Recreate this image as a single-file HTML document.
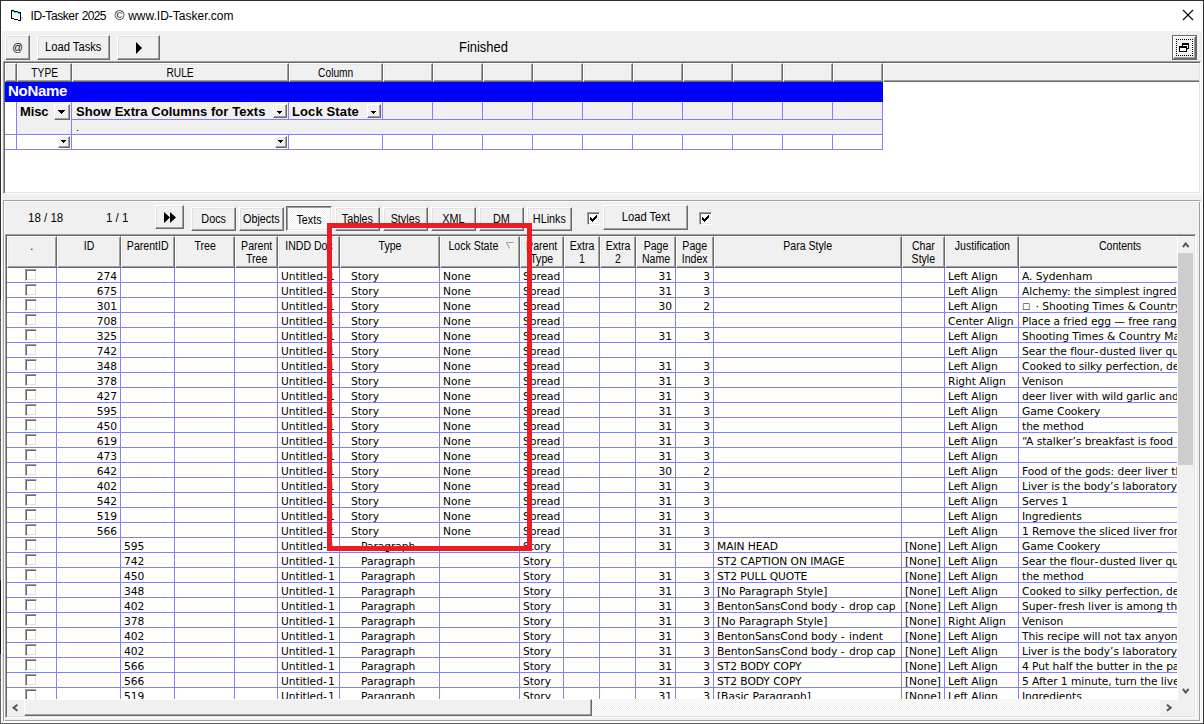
<!DOCTYPE html><html><head><meta charset="utf-8"><title>ID-Tasker 2025</title><style>
*{box-sizing:border-box;margin:0;padding:0}
html,body{width:1204px;height:724px;overflow:hidden;background:#f0f0f0}
body{position:relative;font-family:"Liberation Sans",sans-serif;font-size:11px;color:#000}
.a{position:absolute}
.t{position:absolute;white-space:pre;line-height:1}
.ms{font-family:"Liberation Sans",sans-serif;font-size:11px}
.dj{font-family:"DejaVu Sans","Liberation Sans",sans-serif;font-size:10.7px;letter-spacing:-0.05px}
.btn{position:absolute;background:#f0f0f0;border-top:1px solid #fff;border-left:1px solid #fff;border-right:1px solid #696969;border-bottom:1px solid #696969;box-shadow:inset -1px -1px 0 #a0a0a0, inset 1px 1px 0 #e3e3e3;text-align:center;white-space:pre}
.btn.down{border-color:#696969 #fff #fff #696969;box-shadow:inset 1px 1px 0 #a0a0a0, inset -1px -1px 0 #e3e3e3;background-color:#f8f8f8;background-image:conic-gradient(#fff 25%,#f0f0f0 0 50%,#fff 0 75%,#f0f0f0 0);background-size:2px 2px}
.hc{position:absolute;background:#f0f0f0;border-top:1px solid #fff;border-left:1px solid #fff;border-right:1px solid #696969;border-bottom:1px solid #696969;box-shadow:inset -1px -1px 0 #a0a0a0, inset 1px 1px 0 #e8e8e8;text-align:center;white-space:pre;overflow:hidden}
.vl{position:absolute;width:1px;background:#8080ff}
.hl{position:absolute;height:1px;background:#8080ff}
.cb{position:absolute;width:12px;height:12px;background:#fff;border-top:1px solid #a0a0a0;border-left:1px solid #a0a0a0;border-right:1px solid #fff;border-bottom:1px solid #fff;box-shadow:inset 1px 1px 0 #696969, inset -1px -1px 0 #e3e3e3}
.dd{position:absolute;background:#f0f0f0;border-top:1px solid #fff;border-left:1px solid #fff;border-right:1px solid #696969;border-bottom:1px solid #696969;box-shadow:inset -1px -1px 0 #a0a0a0}
.b13{font-weight:bold;font-size:13px}
.sx{display:inline-block;font-size:12px;transform:scaleX(.88);transform-origin:50% 50%;white-space:pre;text-align:center}
.sl{transform-origin:0 50%}
</style></head><body>
<div class="a" style="left:0;top:0;width:1204px;height:724px;border:1px solid #2e2e2e;border-bottom-color:#5a5a5a"></div>
<div class="a" style="left:0;top:300px;width:1px;height:424px;background:linear-gradient(#666 0 280px,#1a1a1a 280px 354px,#666 354px)"></div>
<div class="a" style="left:1px;top:1px;width:1202px;height:722px;border:1px solid #fff;border-top:0"></div>
<div class="a" style="left:1px;top:1px;width:1202px;height:30px;background:#fff"></div>
<svg class="a" style="left:11px;top:10px" width="13" height="11" viewBox="0 0 13 11" shape-rendering="crispEdges"><rect x="0" y="0" width="3" height="1" fill="#000"/><rect x="0" y="1" width="1" height="8" fill="#000"/><rect x="3" y="1" width="4" height="1" fill="#000"/><rect x="7" y="2" width="3" height="1" fill="#000"/><rect x="9" y="2" width="1" height="9" fill="#000"/><rect x="0" y="8" width="3" height="1" fill="#000"/><rect x="3" y="9" width="4" height="1" fill="#000"/><rect x="7" y="10" width="3" height="1" fill="#000"/><rect x="1" y="1" width="2" height="1" fill="#00e5ee"/><rect x="3" y="2" width="4" height="1" fill="#00e5ee"/><rect x="7" y="3" width="2" height="1" fill="#00e5ee"/><rect x="1" y="2" width="2" height="6" fill="#fff"/><rect x="3" y="3" width="4" height="6" fill="#fff"/><rect x="7" y="4" width="2" height="6" fill="#fff"/><path d="M10.3 7.6L12.6 7.6L10.3 9.8Z" fill="#a8a8a8" shape-rendering="auto"/></svg>
<div class="t" style="left:30.5px;top:9px;font-size:12px;line-height:14px;letter-spacing:-0.4px">ID-Tasker</div>
<div class="t" style="left:81.8px;top:9px;font-size:12px;line-height:14px;letter-spacing:-0.65px">2025</div>
<div class="t" style="left:114.5px;top:8px;font-size:13.5px;line-height:15px">©</div>
<div class="t" style="left:128.2px;top:9px;font-size:12px;line-height:14px">www.ID-Tasker.com</div>
<svg class="a" style="left:1182px;top:9px" width="12" height="12" viewBox="0 0 12 12"><path d="M1 1L11 11M11 1L1 11" stroke="#000" stroke-width="1.1" fill="none"/></svg>
<div class="btn " style="left:5px;top:35px;width:25px;height:25px;line-height:22px;"><span class="sx " style="transform:scaleX(1.0)"><span style="font-size:10.5px">@</span></span></div>
<div class="btn " style="left:37px;top:35px;width:73px;height:25px;line-height:22px;"><span class="sx " style="transform:scaleX(0.93)">Load Tasks</span></div>
<div class="btn " style="left:117px;top:35px;width:43px;height:25px;line-height:22px;"></div>
<svg class="a" style="left:135px;top:41px" width="8" height="14" viewBox="0 0 8 14"><path d="M1 1L7 7L1 13Z" fill="#000"/></svg>
<div class="t" style="left:459px;top:39px;font-size:14px;line-height:16px;transform:scaleX(.925);transform-origin:0 50%">Finished</div>
<div class="a" style="left:1172px;top:35px;width:25px;height:25px;border:1px solid #696969;background:#f0f0f0"></div>
<div class="a" style="left:1173px;top:36px;width:23px;height:23px;border-top:1px solid #fff;border-left:1px solid #fff;border-right:1px solid #696969;border-bottom:1px solid #696969;box-shadow:inset -1px -1px 0 #a0a0a0"></div>
<div class="a" style="left:1176px;top:39px;width:17px;height:17px;border:1px dotted #000"></div>
<svg class="a" style="left:1179px;top:42px" width="11" height="11" viewBox="0 0 11 11"><rect x="3.5" y="1.5" width="6" height="5" fill="#fff" stroke="#000"/><rect x="3" y="1" width="7" height="2" fill="#000"/><rect x="0.5" y="4.5" width="7" height="5" fill="#fff" stroke="#000"/><rect x="0" y="4" width="8" height="2" fill="#000"/></svg>
<div class="a" style="left:3px;top:61px;width:1198px;height:133px;background:#fff;border-top:1px solid #a0a0a0;border-left:1px solid #a0a0a0;border-right:1px solid #fff;border-bottom:1px solid #fff;box-shadow:inset 1px 1px 0 #696969, inset -1px -1px 0 #e3e3e3"></div>
<div class="hc" style="left:5px;top:63px;width:12px;height:19px;line-height:18px"></div>
<div class="hc" style="left:17px;top:63px;width:55px;height:19px;line-height:18px"><span class="sx " style="transform:scaleX(0.85)">TYPE</span></div>
<div class="hc" style="left:72px;top:63px;width:217px;height:19px;line-height:18px"><span class="sx " style="transform:scaleX(0.85)">RULE</span></div>
<div class="hc" style="left:289px;top:63px;width:94px;height:19px;line-height:18px"><span class="sx " style="transform:scaleX(0.85)">Column</span></div>
<div class="hc" style="left:383px;top:63px;width:50px;height:19px;line-height:18px"></div>
<div class="hc" style="left:433px;top:63px;width:50px;height:19px;line-height:18px"></div>
<div class="hc" style="left:483px;top:63px;width:50px;height:19px;line-height:18px"></div>
<div class="hc" style="left:533px;top:63px;width:50px;height:19px;line-height:18px"></div>
<div class="hc" style="left:583px;top:63px;width:50px;height:19px;line-height:18px"></div>
<div class="hc" style="left:633px;top:63px;width:50px;height:19px;line-height:18px"></div>
<div class="hc" style="left:683px;top:63px;width:50px;height:19px;line-height:18px"></div>
<div class="hc" style="left:733px;top:63px;width:50px;height:19px;line-height:18px"></div>
<div class="hc" style="left:783px;top:63px;width:50px;height:19px;line-height:18px"></div>
<div class="hc" style="left:833px;top:63px;width:50px;height:19px;line-height:18px"></div>
<div class="hc" style="left:883px;top:63px;width:316px;height:19px;border-right:0;box-shadow:inset 0 -1px 0 #a0a0a0"></div>
<div class="a" style="left:5px;top:82px;width:878px;height:20px;background:#0000ff"></div>
<div class="t" style="left:8px;top:81px;font-weight:bold;font-size:15px;line-height:20px;color:#fff;letter-spacing:-0.3px">NoName</div>
<div class="a" style="left:17px;top:102px;width:865px;height:32px;background:#f0f0f0"></div>
<div class="hl" style="left:72px;top:119px;width:811px"></div>
<div class="hl" style="left:5px;top:134px;width:878px"></div>
<div class="hl" style="left:5px;top:149px;width:878px"></div>
<div class="vl" style="left:16px;top:102px;height:48px"></div>
<div class="vl" style="left:71px;top:102px;height:48px"></div>
<div class="vl" style="left:288px;top:102px;height:18px"></div>
<div class="vl" style="left:288px;top:134px;height:16px"></div>
<div class="vl" style="left:382px;top:102px;height:18px"></div>
<div class="vl" style="left:382px;top:134px;height:16px"></div>
<div class="vl" style="left:432px;top:102px;height:18px"></div>
<div class="vl" style="left:432px;top:134px;height:16px"></div>
<div class="vl" style="left:482px;top:102px;height:18px"></div>
<div class="vl" style="left:482px;top:134px;height:16px"></div>
<div class="vl" style="left:532px;top:102px;height:18px"></div>
<div class="vl" style="left:532px;top:134px;height:16px"></div>
<div class="vl" style="left:582px;top:102px;height:18px"></div>
<div class="vl" style="left:582px;top:134px;height:16px"></div>
<div class="vl" style="left:632px;top:102px;height:18px"></div>
<div class="vl" style="left:632px;top:134px;height:16px"></div>
<div class="vl" style="left:682px;top:102px;height:18px"></div>
<div class="vl" style="left:682px;top:134px;height:16px"></div>
<div class="vl" style="left:732px;top:102px;height:18px"></div>
<div class="vl" style="left:732px;top:134px;height:16px"></div>
<div class="vl" style="left:782px;top:102px;height:18px"></div>
<div class="vl" style="left:782px;top:134px;height:16px"></div>
<div class="vl" style="left:832px;top:102px;height:18px"></div>
<div class="vl" style="left:832px;top:134px;height:16px"></div>
<div class="vl" style="left:882px;top:102px;height:18px"></div>
<div class="vl" style="left:882px;top:134px;height:16px"></div>
<div class="vl" style="left:882px;top:119px;height:16px"></div>
<div class="t b13" style="left:20px;top:103px;line-height:17px;letter-spacing:-0.1px">Misc</div>
<div class="t b13" style="left:76px;top:103px;line-height:17px;letter-spacing:0.07px">Show Extra Columns for Texts</div>
<div class="t b13" style="left:292px;top:103px;line-height:17px;letter-spacing:0.12px">Lock State</div>
<div class="t" style="left:76px;top:121px;line-height:12px;font-size:11px">.</div>
<div class="dd" style="left:54px;top:104px;width:16px;height:16px"></div>
<svg class="a" style="left:58px;top:110px" width="7" height="4" viewBox="0 0 7 4" shape-rendering="crispEdges"><path d="M0 0h7v1h-7zM1 1h5v1h-5zM2 2h3v1h-3zM3 3h1v1h-1z" fill="#000"/></svg>
<div class="dd" style="left:273px;top:104px;width:14px;height:14px"></div>
<svg class="a" style="left:277px;top:111px" width="5" height="3" viewBox="0 0 5 3" shape-rendering="crispEdges"><path d="M0 0h5v1h-5zM1 1h3v1h-3zM2 2h1v1h-1z" fill="#000"/></svg>
<div class="dd" style="left:367px;top:104px;width:14px;height:14px"></div>
<svg class="a" style="left:371px;top:111px" width="5" height="3" viewBox="0 0 5 3" shape-rendering="crispEdges"><path d="M0 0h5v1h-5zM1 1h3v1h-3zM2 2h1v1h-1z" fill="#000"/></svg>
<div class="dd" style="left:58px;top:136px;width:12px;height:12px"></div>
<svg class="a" style="left:61px;top:140px" width="5" height="3" viewBox="0 0 5 3" shape-rendering="crispEdges"><path d="M0 0h5v1h-5zM1 1h3v1h-3zM2 2h1v1h-1z" fill="#000"/></svg>
<div class="dd" style="left:275px;top:136px;width:12px;height:12px"></div>
<svg class="a" style="left:278px;top:140px" width="5" height="3" viewBox="0 0 5 3" shape-rendering="crispEdges"><path d="M0 0h5v1h-5zM1 1h3v1h-3zM2 2h1v1h-1z" fill="#000"/></svg>
<div class="a" style="left:3px;top:200px;width:1198px;height:522px;border-top:1px solid #a0a0a0;border-left:1px solid #a0a0a0;border-right:1px solid #fff;border-bottom:1px solid #fff;box-shadow:inset 1px 1px 0 #fff, inset -1px -1px 0 #a0a0a0"></div>
<div class="t" style="left:28px;top:211px;font-size:12px;line-height:14px;transform:scaleX(.96);transform-origin:0 50%">18 / 18</div>
<div class="t" style="left:106px;top:211px;font-size:12px;line-height:14px;transform:scaleX(.96);transform-origin:0 50%">1 / 1</div>
<div class="btn " style="left:155px;top:205px;width:29px;height:24px;line-height:21px;"></div>
<svg class="a" style="left:163px;top:211px" width="14" height="13" viewBox="0 0 14 13"><path d="M1 1L7 6.5L1 12Z M7 1L13 6.5L7 12Z" fill="#000"/></svg>
<div class="btn " style="left:191px;top:207px;width:45px;height:24px;line-height:21px;padding-top:1px"><span class="sx " style="transform:scaleX(0.9)">Docs</span></div>
<div class="btn " style="left:239px;top:207px;width:45px;height:24px;line-height:21px;padding-top:1px"><span class="sx " style="transform:scaleX(0.9)">Objects</span></div>
<div class="btn down" style="left:286px;top:206px;width:46px;height:25px;line-height:22px;padding-top:2px;padding-left:1px"><span class="sx " style="transform:scaleX(0.9)">Texts</span></div>
<div class="btn " style="left:335px;top:207px;width:45px;height:24px;line-height:21px;padding-top:1px"><span class="sx " style="transform:scaleX(0.9)">Tables</span></div>
<div class="btn " style="left:383px;top:207px;width:45px;height:24px;line-height:21px;padding-top:1px"><span class="sx " style="transform:scaleX(0.9)">Styles</span></div>
<div class="btn " style="left:431px;top:207px;width:45px;height:24px;line-height:21px;padding-top:1px"><span class="sx " style="transform:scaleX(0.9)">XML</span></div>
<div class="btn " style="left:479px;top:207px;width:45px;height:24px;line-height:21px;padding-top:1px"><span class="sx " style="transform:scaleX(0.9)">DM</span></div>
<div class="btn " style="left:527px;top:207px;width:45px;height:24px;line-height:21px;padding-top:1px"><span class="sx " style="transform:scaleX(0.9)">HLinks</span></div>
<div class="btn " style="left:603px;top:205px;width:85px;height:25px;line-height:22px;"><span class="sx " style="transform:scaleX(0.93)">Load Text</span></div>
<div class="cb" style="left:587px;top:212px;width:13px;height:13px"></div>
<svg class="a" style="left:590px;top:215px" width="7" height="7" viewBox="0 0 7 7" shape-rendering="crispEdges"><path d="M0 2h1v3h-1zM1 3h1v3h-1zM2 4h1v3h-1zM3 3h1v3h-1zM4 2h1v3h-1zM5 1h1v3h-1zM6 0h1v3h-1z" fill="#000"/></svg>
<div class="cb" style="left:699px;top:212px;width:13px;height:13px"></div>
<svg class="a" style="left:702px;top:215px" width="7" height="7" viewBox="0 0 7 7" shape-rendering="crispEdges"><path d="M0 2h1v3h-1zM1 3h1v3h-1zM2 4h1v3h-1zM3 3h1v3h-1zM4 2h1v3h-1zM5 1h1v3h-1zM6 0h1v3h-1z" fill="#000"/></svg>
<div class="a" style="left:5px;top:234px;width:1191px;height:484px;background:#fff;border-top:1px solid #a0a0a0;border-left:1px solid #a0a0a0;border-right:1px solid #fff;border-bottom:1px solid #fff;box-shadow:inset 1px 1px 0 #696969, inset -1px -1px 0 #e3e3e3"></div>
<div class="hc" style="left:7px;top:236px;width:50px;height:32px;line-height:13px;padding-top:3px;"><span class="sx " style="transform:scaleX(0.88)">.</span></div>
<div class="hc" style="left:57px;top:236px;width:64px;height:32px;line-height:13px;padding-top:3px;"><span class="sx " style="transform:scaleX(0.88)">ID</span></div>
<div class="hc" style="left:121px;top:236px;width:54px;height:32px;line-height:13px;padding-top:3px;"><span class="sx " style="transform:scaleX(0.88)">ParentID</span></div>
<div class="hc" style="left:175px;top:236px;width:60px;height:32px;line-height:13px;padding-top:3px;"><span class="sx " style="transform:scaleX(0.88)">Tree</span></div>
<div class="hc" style="left:235px;top:236px;width:43px;height:32px;line-height:13px;padding-top:3px;"><span class="sx " style="transform:scaleX(0.88)">Parent
Tree</span></div>
<div class="hc" style="left:278px;top:236px;width:62px;height:32px;line-height:13px;padding-top:3px;"><span class="sx " style="transform:scaleX(0.88)">INDD Doc</span></div>
<div class="hc" style="left:340px;top:236px;width:100px;height:32px;line-height:13px;padding-top:3px;"><span class="sx " style="transform:scaleX(0.88)">Type</span></div>
<div class="hc" style="left:440px;top:236px;width:80px;height:32px;line-height:13px;padding-top:3px;padding-right:13px;"><span class="sx " style="transform:scaleX(0.88)">Lock State</span></div>
<div class="hc" style="left:520px;top:236px;width:44px;height:32px;line-height:13px;padding-top:3px;"><span class="sx " style="transform:scaleX(0.88)">Parent
Type</span></div>
<div class="hc" style="left:564px;top:236px;width:36px;height:32px;line-height:13px;padding-top:3px;"><span class="sx " style="transform:scaleX(0.88)">Extra
1</span></div>
<div class="hc" style="left:600px;top:236px;width:36px;height:32px;line-height:13px;padding-top:3px;"><span class="sx " style="transform:scaleX(0.88)">Extra
2</span></div>
<div class="hc" style="left:636px;top:236px;width:40px;height:32px;line-height:13px;padding-top:3px;"><span class="sx " style="transform:scaleX(0.88)">Page
Name</span></div>
<div class="hc" style="left:676px;top:236px;width:38px;height:32px;line-height:13px;padding-top:3px;"><span class="sx " style="transform:scaleX(0.88)">Page
Index</span></div>
<div class="hc" style="left:714px;top:236px;width:188px;height:32px;line-height:13px;padding-top:3px;"><span class="sx " style="transform:scaleX(0.88)">Para Style</span></div>
<div class="hc" style="left:902px;top:236px;width:43px;height:32px;line-height:13px;padding-top:3px;"><span class="sx " style="transform:scaleX(0.88)">Char
Style</span></div>
<div class="hc" style="left:945px;top:236px;width:74px;height:32px;line-height:13px;padding-top:3px;"><span class="sx " style="transform:scaleX(0.88)">Justification</span></div>
<div class="hc" style="left:1019px;top:236px;width:158px;height:32px;line-height:13px;padding-top:3px;border-right:0;box-shadow:inset 0 -1px 0 #a0a0a0, inset 1px 1px 0 #e8e8e8;padding-left:43px"><span class="sx " style="transform:scaleX(0.88)">Contents</span></div>
<svg class="a" style="left:506px;top:242px" width="8" height="7" viewBox="0 0 8 7"><path d="M0 0.5H8" stroke="#a0a0a0"/><path d="M0.5 0.5L3.6 6.5" stroke="#a0a0a0" stroke-width="1.1"/><path d="M7.5 1L4.4 6.5" stroke="#fff" stroke-width="1.1"/></svg>
<div class="a" style="left:7px;top:268px;width:1170px;height:431px;overflow:hidden">
<div class="vl" style="left:49px;top:0;height:431px"></div>
<div class="vl" style="left:113px;top:0;height:431px"></div>
<div class="vl" style="left:167px;top:0;height:431px"></div>
<div class="vl" style="left:227px;top:0;height:431px"></div>
<div class="vl" style="left:270px;top:0;height:431px"></div>
<div class="vl" style="left:332px;top:0;height:431px"></div>
<div class="vl" style="left:432px;top:0;height:431px"></div>
<div class="vl" style="left:512px;top:0;height:431px"></div>
<div class="vl" style="left:556px;top:0;height:431px"></div>
<div class="vl" style="left:592px;top:0;height:431px"></div>
<div class="vl" style="left:628px;top:0;height:431px"></div>
<div class="vl" style="left:668px;top:0;height:431px"></div>
<div class="vl" style="left:706px;top:0;height:431px"></div>
<div class="vl" style="left:894px;top:0;height:431px"></div>
<div class="vl" style="left:937px;top:0;height:431px"></div>
<div class="vl" style="left:1011px;top:0;height:431px"></div>
<div class="hl" style="left:0;top:14px;width:1170px"></div>
<div class="cb" style="left:18px;top:1px"></div>
<div class="t dj" style="left:50px;width:60px;text-align:right;top:2px;line-height:14px">274</div>
<div class="t dj" style="left:274px;top:2px;line-height:14px">Untitled<span style="letter-spacing:1.2px">-</span>1</div>
<div class="t dj" style="left:344px;top:2px;line-height:14px">Story</div>
<div class="t dj" style="left:436px;top:2px;line-height:14px">None</div>
<div class="t dj" style="left:516px;top:2px;line-height:14px">Spread</div>
<div class="t dj" style="left:629px;width:36px;text-align:right;top:2px;line-height:14px">31</div>
<div class="t dj" style="left:669px;width:34px;text-align:right;top:2px;line-height:14px">3</div>
<div class="t dj" style="left:941px;top:2px;line-height:14px">Left Align</div>
<div class="t dj" style="left:1015px;top:2px;line-height:14px">A. Sydenham</div>
<div class="hl" style="left:0;top:29px;width:1170px"></div>
<div class="cb" style="left:18px;top:16px"></div>
<div class="t dj" style="left:50px;width:60px;text-align:right;top:17px;line-height:14px">675</div>
<div class="t dj" style="left:274px;top:17px;line-height:14px">Untitled<span style="letter-spacing:1.2px">-</span>1</div>
<div class="t dj" style="left:344px;top:17px;line-height:14px">Story</div>
<div class="t dj" style="left:436px;top:17px;line-height:14px">None</div>
<div class="t dj" style="left:516px;top:17px;line-height:14px">Spread</div>
<div class="t dj" style="left:629px;width:36px;text-align:right;top:17px;line-height:14px">31</div>
<div class="t dj" style="left:669px;width:34px;text-align:right;top:17px;line-height:14px">3</div>
<div class="t dj" style="left:941px;top:17px;line-height:14px">Left Align</div>
<div class="t dj" style="left:1015px;top:17px;line-height:14px">Alchemy: the simplest ingredients</div>
<div class="hl" style="left:0;top:44px;width:1170px"></div>
<div class="cb" style="left:18px;top:31px"></div>
<div class="t dj" style="left:50px;width:60px;text-align:right;top:32px;line-height:14px">301</div>
<div class="t dj" style="left:274px;top:32px;line-height:14px">Untitled<span style="letter-spacing:1.2px">-</span>1</div>
<div class="t dj" style="left:344px;top:32px;line-height:14px">Story</div>
<div class="t dj" style="left:436px;top:32px;line-height:14px">None</div>
<div class="t dj" style="left:516px;top:32px;line-height:14px">Spread</div>
<div class="t dj" style="left:629px;width:36px;text-align:right;top:32px;line-height:14px">30</div>
<div class="t dj" style="left:669px;width:34px;text-align:right;top:32px;line-height:14px">2</div>
<div class="t dj" style="left:941px;top:32px;line-height:14px">Left Align</div>
<div class="t dj" style="left:1015px;top:32px;line-height:14px"><span style="font-size:8.5px;letter-spacing:2.2px;position:relative;top:-1.5px">□</span> · Shooting Times &amp; Country Magazine</div>
<div class="hl" style="left:0;top:59px;width:1170px"></div>
<div class="cb" style="left:18px;top:46px"></div>
<div class="t dj" style="left:50px;width:60px;text-align:right;top:47px;line-height:14px">708</div>
<div class="t dj" style="left:274px;top:47px;line-height:14px">Untitled<span style="letter-spacing:1.2px">-</span>1</div>
<div class="t dj" style="left:344px;top:47px;line-height:14px">Story</div>
<div class="t dj" style="left:436px;top:47px;line-height:14px">None</div>
<div class="t dj" style="left:516px;top:47px;line-height:14px">Spread</div>
<div class="t dj" style="left:941px;top:47px;line-height:14px">Center Align</div>
<div class="t dj" style="left:1015px;top:47px;line-height:14px">Place a fried egg — free range, of course</div>
<div class="hl" style="left:0;top:74px;width:1170px"></div>
<div class="cb" style="left:18px;top:61px"></div>
<div class="t dj" style="left:50px;width:60px;text-align:right;top:62px;line-height:14px">325</div>
<div class="t dj" style="left:274px;top:62px;line-height:14px">Untitled<span style="letter-spacing:1.2px">-</span>1</div>
<div class="t dj" style="left:344px;top:62px;line-height:14px">Story</div>
<div class="t dj" style="left:436px;top:62px;line-height:14px">None</div>
<div class="t dj" style="left:516px;top:62px;line-height:14px">Spread</div>
<div class="t dj" style="left:629px;width:36px;text-align:right;top:62px;line-height:14px">31</div>
<div class="t dj" style="left:669px;width:34px;text-align:right;top:62px;line-height:14px">3</div>
<div class="t dj" style="left:941px;top:62px;line-height:14px">Left Align</div>
<div class="t dj" style="left:1015px;top:62px;line-height:14px">Shooting Times &amp; Country Magazine</div>
<div class="hl" style="left:0;top:89px;width:1170px"></div>
<div class="cb" style="left:18px;top:76px"></div>
<div class="t dj" style="left:50px;width:60px;text-align:right;top:77px;line-height:14px">742</div>
<div class="t dj" style="left:274px;top:77px;line-height:14px">Untitled<span style="letter-spacing:1.2px">-</span>1</div>
<div class="t dj" style="left:344px;top:77px;line-height:14px">Story</div>
<div class="t dj" style="left:436px;top:77px;line-height:14px">None</div>
<div class="t dj" style="left:516px;top:77px;line-height:14px">Spread</div>
<div class="t dj" style="left:941px;top:77px;line-height:14px">Left Align</div>
<div class="t dj" style="left:1015px;top:77px;line-height:14px">Sear the flour<span style="letter-spacing:1.2px">-</span>dusted liver quickly</div>
<div class="hl" style="left:0;top:104px;width:1170px"></div>
<div class="cb" style="left:18px;top:91px"></div>
<div class="t dj" style="left:50px;width:60px;text-align:right;top:92px;line-height:14px">348</div>
<div class="t dj" style="left:274px;top:92px;line-height:14px">Untitled<span style="letter-spacing:1.2px">-</span>1</div>
<div class="t dj" style="left:344px;top:92px;line-height:14px">Story</div>
<div class="t dj" style="left:436px;top:92px;line-height:14px">None</div>
<div class="t dj" style="left:516px;top:92px;line-height:14px">Spread</div>
<div class="t dj" style="left:629px;width:36px;text-align:right;top:92px;line-height:14px">31</div>
<div class="t dj" style="left:669px;width:34px;text-align:right;top:92px;line-height:14px">3</div>
<div class="t dj" style="left:941px;top:92px;line-height:14px">Left Align</div>
<div class="t dj" style="left:1015px;top:92px;line-height:14px">Cooked to silky perfection, deer liver</div>
<div class="hl" style="left:0;top:119px;width:1170px"></div>
<div class="cb" style="left:18px;top:106px"></div>
<div class="t dj" style="left:50px;width:60px;text-align:right;top:107px;line-height:14px">378</div>
<div class="t dj" style="left:274px;top:107px;line-height:14px">Untitled<span style="letter-spacing:1.2px">-</span>1</div>
<div class="t dj" style="left:344px;top:107px;line-height:14px">Story</div>
<div class="t dj" style="left:436px;top:107px;line-height:14px">None</div>
<div class="t dj" style="left:516px;top:107px;line-height:14px">Spread</div>
<div class="t dj" style="left:629px;width:36px;text-align:right;top:107px;line-height:14px">31</div>
<div class="t dj" style="left:669px;width:34px;text-align:right;top:107px;line-height:14px">3</div>
<div class="t dj" style="left:941px;top:107px;line-height:14px">Right Align</div>
<div class="t dj" style="left:1015px;top:107px;line-height:14px">Venison</div>
<div class="hl" style="left:0;top:134px;width:1170px"></div>
<div class="cb" style="left:18px;top:121px"></div>
<div class="t dj" style="left:50px;width:60px;text-align:right;top:122px;line-height:14px">427</div>
<div class="t dj" style="left:274px;top:122px;line-height:14px">Untitled<span style="letter-spacing:1.2px">-</span>1</div>
<div class="t dj" style="left:344px;top:122px;line-height:14px">Story</div>
<div class="t dj" style="left:436px;top:122px;line-height:14px">None</div>
<div class="t dj" style="left:516px;top:122px;line-height:14px">Spread</div>
<div class="t dj" style="left:629px;width:36px;text-align:right;top:122px;line-height:14px">31</div>
<div class="t dj" style="left:669px;width:34px;text-align:right;top:122px;line-height:14px">3</div>
<div class="t dj" style="left:941px;top:122px;line-height:14px">Left Align</div>
<div class="t dj" style="left:1015px;top:122px;line-height:14px">deer liver with wild garlic and bacon</div>
<div class="hl" style="left:0;top:149px;width:1170px"></div>
<div class="cb" style="left:18px;top:136px"></div>
<div class="t dj" style="left:50px;width:60px;text-align:right;top:137px;line-height:14px">595</div>
<div class="t dj" style="left:274px;top:137px;line-height:14px">Untitled<span style="letter-spacing:1.2px">-</span>1</div>
<div class="t dj" style="left:344px;top:137px;line-height:14px">Story</div>
<div class="t dj" style="left:436px;top:137px;line-height:14px">None</div>
<div class="t dj" style="left:516px;top:137px;line-height:14px">Spread</div>
<div class="t dj" style="left:629px;width:36px;text-align:right;top:137px;line-height:14px">31</div>
<div class="t dj" style="left:669px;width:34px;text-align:right;top:137px;line-height:14px">3</div>
<div class="t dj" style="left:941px;top:137px;line-height:14px">Left Align</div>
<div class="t dj" style="left:1015px;top:137px;line-height:14px">Game Cookery</div>
<div class="hl" style="left:0;top:164px;width:1170px"></div>
<div class="cb" style="left:18px;top:151px"></div>
<div class="t dj" style="left:50px;width:60px;text-align:right;top:152px;line-height:14px">450</div>
<div class="t dj" style="left:274px;top:152px;line-height:14px">Untitled<span style="letter-spacing:1.2px">-</span>1</div>
<div class="t dj" style="left:344px;top:152px;line-height:14px">Story</div>
<div class="t dj" style="left:436px;top:152px;line-height:14px">None</div>
<div class="t dj" style="left:516px;top:152px;line-height:14px">Spread</div>
<div class="t dj" style="left:629px;width:36px;text-align:right;top:152px;line-height:14px">31</div>
<div class="t dj" style="left:669px;width:34px;text-align:right;top:152px;line-height:14px">3</div>
<div class="t dj" style="left:941px;top:152px;line-height:14px">Left Align</div>
<div class="t dj" style="left:1015px;top:152px;line-height:14px">the method</div>
<div class="hl" style="left:0;top:179px;width:1170px"></div>
<div class="cb" style="left:18px;top:166px"></div>
<div class="t dj" style="left:50px;width:60px;text-align:right;top:167px;line-height:14px">619</div>
<div class="t dj" style="left:274px;top:167px;line-height:14px">Untitled<span style="letter-spacing:1.2px">-</span>1</div>
<div class="t dj" style="left:344px;top:167px;line-height:14px">Story</div>
<div class="t dj" style="left:436px;top:167px;line-height:14px">None</div>
<div class="t dj" style="left:516px;top:167px;line-height:14px">Spread</div>
<div class="t dj" style="left:629px;width:36px;text-align:right;top:167px;line-height:14px">31</div>
<div class="t dj" style="left:669px;width:34px;text-align:right;top:167px;line-height:14px">3</div>
<div class="t dj" style="left:941px;top:167px;line-height:14px">Left Align</div>
<div class="t dj" style="left:1015px;top:167px;line-height:14px">“A stalker’s breakfast is food of the gods</div>
<div class="hl" style="left:0;top:194px;width:1170px"></div>
<div class="cb" style="left:18px;top:181px"></div>
<div class="t dj" style="left:50px;width:60px;text-align:right;top:182px;line-height:14px">473</div>
<div class="t dj" style="left:274px;top:182px;line-height:14px">Untitled<span style="letter-spacing:1.2px">-</span>1</div>
<div class="t dj" style="left:344px;top:182px;line-height:14px">Story</div>
<div class="t dj" style="left:436px;top:182px;line-height:14px">None</div>
<div class="t dj" style="left:516px;top:182px;line-height:14px">Spread</div>
<div class="t dj" style="left:629px;width:36px;text-align:right;top:182px;line-height:14px">31</div>
<div class="t dj" style="left:669px;width:34px;text-align:right;top:182px;line-height:14px">3</div>
<div class="t dj" style="left:941px;top:182px;line-height:14px">Left Align</div>
<div class="hl" style="left:0;top:209px;width:1170px"></div>
<div class="cb" style="left:18px;top:196px"></div>
<div class="t dj" style="left:50px;width:60px;text-align:right;top:197px;line-height:14px">642</div>
<div class="t dj" style="left:274px;top:197px;line-height:14px">Untitled<span style="letter-spacing:1.2px">-</span>1</div>
<div class="t dj" style="left:344px;top:197px;line-height:14px">Story</div>
<div class="t dj" style="left:436px;top:197px;line-height:14px">None</div>
<div class="t dj" style="left:516px;top:197px;line-height:14px">Spread</div>
<div class="t dj" style="left:629px;width:36px;text-align:right;top:197px;line-height:14px">30</div>
<div class="t dj" style="left:669px;width:34px;text-align:right;top:197px;line-height:14px">2</div>
<div class="t dj" style="left:941px;top:197px;line-height:14px">Left Align</div>
<div class="t dj" style="left:1015px;top:197px;line-height:14px">Food of the gods: deer liver that</div>
<div class="hl" style="left:0;top:224px;width:1170px"></div>
<div class="cb" style="left:18px;top:211px"></div>
<div class="t dj" style="left:50px;width:60px;text-align:right;top:212px;line-height:14px">402</div>
<div class="t dj" style="left:274px;top:212px;line-height:14px">Untitled<span style="letter-spacing:1.2px">-</span>1</div>
<div class="t dj" style="left:344px;top:212px;line-height:14px">Story</div>
<div class="t dj" style="left:436px;top:212px;line-height:14px">None</div>
<div class="t dj" style="left:516px;top:212px;line-height:14px">Spread</div>
<div class="t dj" style="left:629px;width:36px;text-align:right;top:212px;line-height:14px">31</div>
<div class="t dj" style="left:669px;width:34px;text-align:right;top:212px;line-height:14px">3</div>
<div class="t dj" style="left:941px;top:212px;line-height:14px">Left Align</div>
<div class="t dj" style="left:1015px;top:212px;line-height:14px">Liver is the body’s laboratory and</div>
<div class="hl" style="left:0;top:239px;width:1170px"></div>
<div class="cb" style="left:18px;top:226px"></div>
<div class="t dj" style="left:50px;width:60px;text-align:right;top:227px;line-height:14px">542</div>
<div class="t dj" style="left:274px;top:227px;line-height:14px">Untitled<span style="letter-spacing:1.2px">-</span>1</div>
<div class="t dj" style="left:344px;top:227px;line-height:14px">Story</div>
<div class="t dj" style="left:436px;top:227px;line-height:14px">None</div>
<div class="t dj" style="left:516px;top:227px;line-height:14px">Spread</div>
<div class="t dj" style="left:629px;width:36px;text-align:right;top:227px;line-height:14px">31</div>
<div class="t dj" style="left:669px;width:34px;text-align:right;top:227px;line-height:14px">3</div>
<div class="t dj" style="left:941px;top:227px;line-height:14px">Left Align</div>
<div class="t dj" style="left:1015px;top:227px;line-height:14px">Serves 1</div>
<div class="hl" style="left:0;top:254px;width:1170px"></div>
<div class="cb" style="left:18px;top:241px"></div>
<div class="t dj" style="left:50px;width:60px;text-align:right;top:242px;line-height:14px">519</div>
<div class="t dj" style="left:274px;top:242px;line-height:14px">Untitled<span style="letter-spacing:1.2px">-</span>1</div>
<div class="t dj" style="left:344px;top:242px;line-height:14px">Story</div>
<div class="t dj" style="left:436px;top:242px;line-height:14px">None</div>
<div class="t dj" style="left:516px;top:242px;line-height:14px">Spread</div>
<div class="t dj" style="left:629px;width:36px;text-align:right;top:242px;line-height:14px">31</div>
<div class="t dj" style="left:669px;width:34px;text-align:right;top:242px;line-height:14px">3</div>
<div class="t dj" style="left:941px;top:242px;line-height:14px">Left Align</div>
<div class="t dj" style="left:1015px;top:242px;line-height:14px">Ingredients</div>
<div class="hl" style="left:0;top:269px;width:1170px"></div>
<div class="cb" style="left:18px;top:256px"></div>
<div class="t dj" style="left:50px;width:60px;text-align:right;top:257px;line-height:14px">566</div>
<div class="t dj" style="left:274px;top:257px;line-height:14px">Untitled<span style="letter-spacing:1.2px">-</span>1</div>
<div class="t dj" style="left:344px;top:257px;line-height:14px">Story</div>
<div class="t dj" style="left:436px;top:257px;line-height:14px">None</div>
<div class="t dj" style="left:516px;top:257px;line-height:14px">Spread</div>
<div class="t dj" style="left:629px;width:36px;text-align:right;top:257px;line-height:14px">31</div>
<div class="t dj" style="left:669px;width:34px;text-align:right;top:257px;line-height:14px">3</div>
<div class="t dj" style="left:941px;top:257px;line-height:14px">Left Align</div>
<div class="t dj" style="left:1015px;top:257px;line-height:14px">1 Remove the sliced liver from the</div>
<div class="hl" style="left:0;top:284px;width:1170px"></div>
<div class="cb" style="left:18px;top:271px"></div>
<div class="t dj" style="left:117px;top:272px;line-height:14px">595</div>
<div class="t dj" style="left:274px;top:272px;line-height:14px">Untitled<span style="letter-spacing:1.2px">-</span>1</div>
<div class="t dj" style="left:354px;top:272px;line-height:14px">Paragraph</div>
<div class="t dj" style="left:516px;top:272px;line-height:14px">Story</div>
<div class="t dj" style="left:629px;width:36px;text-align:right;top:272px;line-height:14px">31</div>
<div class="t dj" style="left:669px;width:34px;text-align:right;top:272px;line-height:14px">3</div>
<div class="t dj" style="left:710px;top:272px;line-height:14px">MAIN HEAD</div>
<div class="t dj" style="left:898px;top:272px;line-height:14px">[None]</div>
<div class="t dj" style="left:941px;top:272px;line-height:14px">Left Align</div>
<div class="t dj" style="left:1015px;top:272px;line-height:14px">Game Cookery</div>
<div class="hl" style="left:0;top:299px;width:1170px"></div>
<div class="cb" style="left:18px;top:286px"></div>
<div class="t dj" style="left:117px;top:287px;line-height:14px">742</div>
<div class="t dj" style="left:274px;top:287px;line-height:14px">Untitled<span style="letter-spacing:1.2px">-</span>1</div>
<div class="t dj" style="left:354px;top:287px;line-height:14px">Paragraph</div>
<div class="t dj" style="left:516px;top:287px;line-height:14px">Story</div>
<div class="t dj" style="left:710px;top:287px;line-height:14px">ST2 CAPTION ON IMAGE</div>
<div class="t dj" style="left:898px;top:287px;line-height:14px">[None]</div>
<div class="t dj" style="left:941px;top:287px;line-height:14px">Left Align</div>
<div class="t dj" style="left:1015px;top:287px;line-height:14px">Sear the flour<span style="letter-spacing:1.2px">-</span>dusted liver quickly</div>
<div class="hl" style="left:0;top:314px;width:1170px"></div>
<div class="cb" style="left:18px;top:301px"></div>
<div class="t dj" style="left:117px;top:302px;line-height:14px">450</div>
<div class="t dj" style="left:274px;top:302px;line-height:14px">Untitled<span style="letter-spacing:1.2px">-</span>1</div>
<div class="t dj" style="left:354px;top:302px;line-height:14px">Paragraph</div>
<div class="t dj" style="left:516px;top:302px;line-height:14px">Story</div>
<div class="t dj" style="left:629px;width:36px;text-align:right;top:302px;line-height:14px">31</div>
<div class="t dj" style="left:669px;width:34px;text-align:right;top:302px;line-height:14px">3</div>
<div class="t dj" style="left:710px;top:302px;line-height:14px">ST2 PULL QUOTE</div>
<div class="t dj" style="left:898px;top:302px;line-height:14px">[None]</div>
<div class="t dj" style="left:941px;top:302px;line-height:14px">Left Align</div>
<div class="t dj" style="left:1015px;top:302px;line-height:14px">the method</div>
<div class="hl" style="left:0;top:329px;width:1170px"></div>
<div class="cb" style="left:18px;top:316px"></div>
<div class="t dj" style="left:117px;top:317px;line-height:14px">348</div>
<div class="t dj" style="left:274px;top:317px;line-height:14px">Untitled<span style="letter-spacing:1.2px">-</span>1</div>
<div class="t dj" style="left:354px;top:317px;line-height:14px">Paragraph</div>
<div class="t dj" style="left:516px;top:317px;line-height:14px">Story</div>
<div class="t dj" style="left:629px;width:36px;text-align:right;top:317px;line-height:14px">31</div>
<div class="t dj" style="left:669px;width:34px;text-align:right;top:317px;line-height:14px">3</div>
<div class="t dj" style="left:710px;top:317px;line-height:14px">[No Paragraph Style]</div>
<div class="t dj" style="left:898px;top:317px;line-height:14px">[None]</div>
<div class="t dj" style="left:941px;top:317px;line-height:14px">Left Align</div>
<div class="t dj" style="left:1015px;top:317px;line-height:14px">Cooked to silky perfection, deer liver</div>
<div class="hl" style="left:0;top:344px;width:1170px"></div>
<div class="cb" style="left:18px;top:331px"></div>
<div class="t dj" style="left:117px;top:332px;line-height:14px">402</div>
<div class="t dj" style="left:274px;top:332px;line-height:14px">Untitled<span style="letter-spacing:1.2px">-</span>1</div>
<div class="t dj" style="left:354px;top:332px;line-height:14px">Paragraph</div>
<div class="t dj" style="left:516px;top:332px;line-height:14px">Story</div>
<div class="t dj" style="left:629px;width:36px;text-align:right;top:332px;line-height:14px">31</div>
<div class="t dj" style="left:669px;width:34px;text-align:right;top:332px;line-height:14px">3</div>
<div class="t dj" style="left:710px;top:332px;line-height:14px">BentonSansCond body <span style="letter-spacing:1.2px">-</span> drop cap</div>
<div class="t dj" style="left:898px;top:332px;line-height:14px">[None]</div>
<div class="t dj" style="left:941px;top:332px;line-height:14px">Left Align</div>
<div class="t dj" style="left:1015px;top:332px;line-height:14px">Super<span style="letter-spacing:1.2px">-</span>fresh liver is among the</div>
<div class="hl" style="left:0;top:359px;width:1170px"></div>
<div class="cb" style="left:18px;top:346px"></div>
<div class="t dj" style="left:117px;top:347px;line-height:14px">378</div>
<div class="t dj" style="left:274px;top:347px;line-height:14px">Untitled<span style="letter-spacing:1.2px">-</span>1</div>
<div class="t dj" style="left:354px;top:347px;line-height:14px">Paragraph</div>
<div class="t dj" style="left:516px;top:347px;line-height:14px">Story</div>
<div class="t dj" style="left:629px;width:36px;text-align:right;top:347px;line-height:14px">31</div>
<div class="t dj" style="left:669px;width:34px;text-align:right;top:347px;line-height:14px">3</div>
<div class="t dj" style="left:710px;top:347px;line-height:14px">[No Paragraph Style]</div>
<div class="t dj" style="left:898px;top:347px;line-height:14px">[None]</div>
<div class="t dj" style="left:941px;top:347px;line-height:14px">Right Align</div>
<div class="t dj" style="left:1015px;top:347px;line-height:14px">Venison</div>
<div class="hl" style="left:0;top:374px;width:1170px"></div>
<div class="cb" style="left:18px;top:361px"></div>
<div class="t dj" style="left:117px;top:362px;line-height:14px">402</div>
<div class="t dj" style="left:274px;top:362px;line-height:14px">Untitled<span style="letter-spacing:1.2px">-</span>1</div>
<div class="t dj" style="left:354px;top:362px;line-height:14px">Paragraph</div>
<div class="t dj" style="left:516px;top:362px;line-height:14px">Story</div>
<div class="t dj" style="left:629px;width:36px;text-align:right;top:362px;line-height:14px">31</div>
<div class="t dj" style="left:669px;width:34px;text-align:right;top:362px;line-height:14px">3</div>
<div class="t dj" style="left:710px;top:362px;line-height:14px">BentonSansCond body <span style="letter-spacing:1.2px">-</span> indent</div>
<div class="t dj" style="left:898px;top:362px;line-height:14px">[None]</div>
<div class="t dj" style="left:941px;top:362px;line-height:14px">Left Align</div>
<div class="t dj" style="left:1015px;top:362px;line-height:14px">This recipe will not tax anyone</div>
<div class="hl" style="left:0;top:389px;width:1170px"></div>
<div class="cb" style="left:18px;top:376px"></div>
<div class="t dj" style="left:117px;top:377px;line-height:14px">402</div>
<div class="t dj" style="left:274px;top:377px;line-height:14px">Untitled<span style="letter-spacing:1.2px">-</span>1</div>
<div class="t dj" style="left:354px;top:377px;line-height:14px">Paragraph</div>
<div class="t dj" style="left:516px;top:377px;line-height:14px">Story</div>
<div class="t dj" style="left:629px;width:36px;text-align:right;top:377px;line-height:14px">31</div>
<div class="t dj" style="left:669px;width:34px;text-align:right;top:377px;line-height:14px">3</div>
<div class="t dj" style="left:710px;top:377px;line-height:14px">BentonSansCond body <span style="letter-spacing:1.2px">-</span> drop cap</div>
<div class="t dj" style="left:898px;top:377px;line-height:14px">[None]</div>
<div class="t dj" style="left:941px;top:377px;line-height:14px">Left Align</div>
<div class="t dj" style="left:1015px;top:377px;line-height:14px">Liver is the body’s laboratory and</div>
<div class="hl" style="left:0;top:404px;width:1170px"></div>
<div class="cb" style="left:18px;top:391px"></div>
<div class="t dj" style="left:117px;top:392px;line-height:14px">566</div>
<div class="t dj" style="left:274px;top:392px;line-height:14px">Untitled<span style="letter-spacing:1.2px">-</span>1</div>
<div class="t dj" style="left:354px;top:392px;line-height:14px">Paragraph</div>
<div class="t dj" style="left:516px;top:392px;line-height:14px">Story</div>
<div class="t dj" style="left:629px;width:36px;text-align:right;top:392px;line-height:14px">31</div>
<div class="t dj" style="left:669px;width:34px;text-align:right;top:392px;line-height:14px">3</div>
<div class="t dj" style="left:710px;top:392px;line-height:14px">ST2 BODY COPY</div>
<div class="t dj" style="left:898px;top:392px;line-height:14px">[None]</div>
<div class="t dj" style="left:941px;top:392px;line-height:14px">Left Align</div>
<div class="t dj" style="left:1015px;top:392px;line-height:14px">4 Put half the butter in the pan</div>
<div class="hl" style="left:0;top:419px;width:1170px"></div>
<div class="cb" style="left:18px;top:406px"></div>
<div class="t dj" style="left:117px;top:407px;line-height:14px">566</div>
<div class="t dj" style="left:274px;top:407px;line-height:14px">Untitled<span style="letter-spacing:1.2px">-</span>1</div>
<div class="t dj" style="left:354px;top:407px;line-height:14px">Paragraph</div>
<div class="t dj" style="left:516px;top:407px;line-height:14px">Story</div>
<div class="t dj" style="left:629px;width:36px;text-align:right;top:407px;line-height:14px">31</div>
<div class="t dj" style="left:669px;width:34px;text-align:right;top:407px;line-height:14px">3</div>
<div class="t dj" style="left:710px;top:407px;line-height:14px">ST2 BODY COPY</div>
<div class="t dj" style="left:898px;top:407px;line-height:14px">[None]</div>
<div class="t dj" style="left:941px;top:407px;line-height:14px">Left Align</div>
<div class="t dj" style="left:1015px;top:407px;line-height:14px">5 After 1 minute, turn the liver</div>
<div class="hl" style="left:0;top:434px;width:1170px"></div>
<div class="cb" style="left:18px;top:421px"></div>
<div class="t dj" style="left:117px;top:422px;line-height:14px">519</div>
<div class="t dj" style="left:274px;top:422px;line-height:14px">Untitled<span style="letter-spacing:1.2px">-</span>1</div>
<div class="t dj" style="left:354px;top:422px;line-height:14px">Paragraph</div>
<div class="t dj" style="left:516px;top:422px;line-height:14px">Story</div>
<div class="t dj" style="left:629px;width:36px;text-align:right;top:422px;line-height:14px">31</div>
<div class="t dj" style="left:669px;width:34px;text-align:right;top:422px;line-height:14px">3</div>
<div class="t dj" style="left:710px;top:422px;line-height:14px">[Basic Paragraph]</div>
<div class="t dj" style="left:898px;top:422px;line-height:14px">[None]</div>
<div class="t dj" style="left:941px;top:422px;line-height:14px">Left Align</div>
<div class="t dj" style="left:1015px;top:422px;line-height:14px">Ingredients</div>
</div>
<div class="a" style="left:1178px;top:236px;width:16px;height:464px;background:#f0f0f0"></div>
<div class="a" style="left:1178px;top:253px;width:15px;height:212px;background:#cdcdcd"></div>
<svg class="a" style="left:1182px;top:242px" width="8" height="6" viewBox="0 0 8 6"><path d="M0.9 5.1L3.75 1.5L6.6 5.1" stroke="#555" stroke-width="2" fill="none"/></svg>
<svg class="a" style="left:1182px;top:688px" width="8" height="6" viewBox="0 0 8 6"><path d="M0.9 0.9L3.75 4.5L6.6 0.9" stroke="#555" stroke-width="2" fill="none"/></svg>
<div class="a" style="left:7px;top:700px;width:1187px;height:16px;background:#f0f0f0"></div>
<div class="a" style="left:24px;top:699px;width:1136px;height:17px;background-color:#f8f8f8;background-image:conic-gradient(#fff 25%,#f0f0f0 0 50%,#fff 0 75%,#f0f0f0 0);background-size:2px 2px"></div>
<div class="a" style="left:24px;top:699px;width:568px;height:17px;background:#f0f0f0;border-top:1px solid #fff;border-left:1px solid #fff;border-right:1px solid #696969;border-bottom:1px solid #696969;box-shadow:inset -1px -1px 0 #a0a0a0"></div>
<svg class="a" style="left:12px;top:704px" width="7" height="8" viewBox="0 0 7 8"><path d="M5.4 0.8L1.6 3.75L5.4 6.7" stroke="#555" stroke-width="2" fill="none"/></svg>
<svg class="a" style="left:1166px;top:704px" width="7" height="8" viewBox="0 0 7 8"><path d="M0.9 0.8L4.7 3.75L0.9 6.7" stroke="#555" stroke-width="2" fill="none"/></svg>
<div class="a" style="left:327px;top:223px;width:205px;height:328px;border:5px solid #ed1c24"></div>
</body></html>
